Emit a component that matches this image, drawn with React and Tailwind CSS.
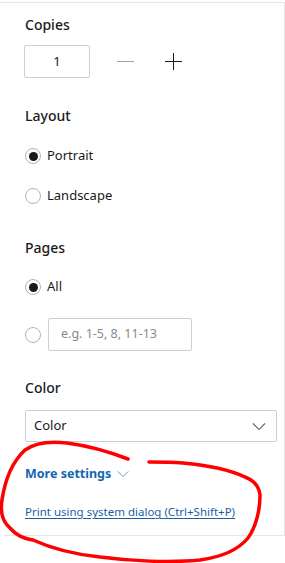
import { useState } from "react"

function Radio({ checked }) {
    return (
        <span className="w-4 h-4 rounded-full border border-[#b3b3b3] bg-white flex items-center justify-center shrink-0">
            {checked && <span className="w-[9px] h-[9px] rounded-full bg-[#1a1a1a]" />}
        </span>
    )
}

function Chevron({ className }) {
    return (
        <svg viewBox="0 0 16 10" className={className} fill="none" stroke="currentColor" strokeWidth="1.2">
            <path d="M1 1.5 L8 8.5 L15 1.5" />
        </svg>
    )
}

export default function App() {
    const [copies] = useState(1)
    return (
        <div className="relative w-[285px] h-[563px] bg-white overflow-hidden text-[#1a1a1a]" style={{ fontFamily: '"Noto Sans", "Open Sans", sans-serif' }}>
            <div className="mt-[2px] h-[533px] border-t border-r border-[#e6e6e6] pl-[25px] pr-[7px]">
                <div className="mt-[12px] text-[14px] leading-[20px] font-medium">Copies</div>
                <div className="mt-[10px] flex items-center">
                    <div className="w-[66px] h-[33px] border border-[#cfcfcf] rounded-[2px] flex items-center justify-center text-[13px] -ml-px">{copies}</div>
                    <span className="ml-[27px] w-[17px] h-px bg-[#9e9e9e]" />
                    <span className="ml-[31px] relative w-[17px] h-[17px]">
                        <span className="absolute left-0 top-[8px] w-[17px] h-px bg-[#1a1a1a]" />
                        <span className="absolute top-0 left-[8px] h-[17px] w-px bg-[#1a1a1a]" />
                    </span>
                </div>

                <div className="mt-[28px] text-[14px] leading-[20px] font-medium">Layout</div>
                <div className="mt-[20px] flex items-center gap-[6px] h-[20px] text-[13px]">
                    <Radio checked />
                    <span>Portrait</span>
                </div>
                <div className="mt-[20px] flex items-center gap-[6px] h-[20px] text-[13px]">
                    <Radio />
                    <span>Landscape</span>
                </div>

                <div className="mt-[32px] text-[14px] leading-[20px] font-medium">Pages</div>
                <div className="mt-[19px] flex items-center gap-[6px] h-[20px] text-[13px]">
                    <Radio checked />
                    <span>All</span>
                </div>
                <div className="mt-[21px] flex items-center gap-[7px]">
                    <Radio />
                    <div className="w-[144px] h-[33px] border border-[#cfcfcf] rounded-[2px] flex items-center px-[12px] text-[12.5px] text-[#8a8a8a]">e.g. 1-5, 8, 11-13</div>
                </div>

                <div className="mt-[27px] text-[14px] leading-[20px] font-medium">Color</div>
                <div className="mt-[12px] w-[252px] h-[32px] border border-[#cfcfcf] rounded-[2px] flex items-center justify-between pl-[8px] pr-[10px] text-[13px]">
                    <span>Color</span>
                    <Chevron className="w-[14px] h-[9px] text-[#555]" />
                </div>

                <div className="mt-[22px] flex items-center gap-[6px] text-[12.5px] leading-[20px] font-bold text-[#1167b1]">
                    <span>More settings</span>
                    <Chevron className="w-[12px] h-[8px] text-[#5b8fc7]" />
                </div>
                <div className="mt-[18px] text-[11.5px] leading-[20px] text-[#1a5fa3] underline underline-offset-2">Print using system dialog (Ctrl+Shift+P)</div>
            </div>
            <div className="ml-[4px] border-b border-[#e6e6e6]" />

            <svg className="absolute inset-0 pointer-events-none" width="285" height="563" viewBox="0 0 285 563" fill="none">
                <path d="M128 459 C 115 454, 90 446, 67 443 C 50 441, 35 443, 25 450 C 12 462, 5 480, 2 500 C 0 512, 3 522, 10 528 C 16 535, 22 538, 33 540 C 55 550, 80 555, 100 557 C 130 561, 170 563, 200 560 C 222 557, 238 550, 248 538 C 256 527, 260 510, 260 495 C 259 485, 253 480, 245 477 C 230 470, 205 465, 183 463 C 170 462, 158 462, 149 462" stroke="#ff0000" strokeWidth="3.5" strokeLinecap="round" strokeLinejoin="round" />
            </svg>
        </div>
    )
}
